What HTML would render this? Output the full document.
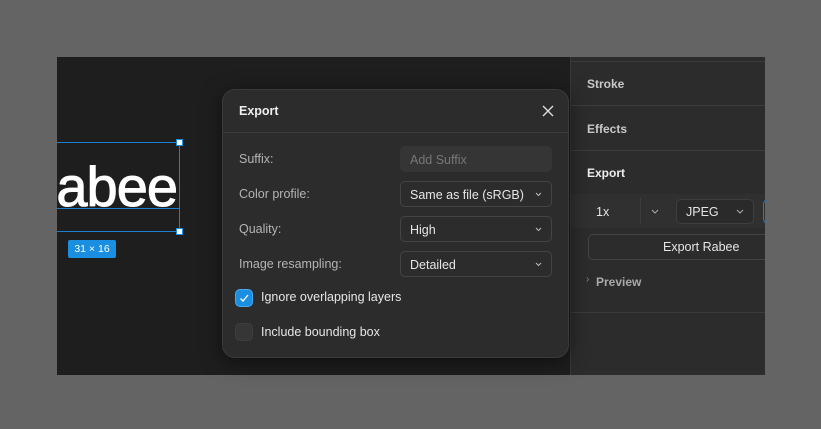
<!DOCTYPE html>
<html><head><style>
*{margin:0;padding:0;box-sizing:border-box}
body{width:821px;height:429px;background:#646464;position:relative;overflow:hidden;font-family:"Liberation Sans",sans-serif}
.abs{position:absolute}
.canvas{left:57px;top:57px;width:513px;height:318px;background:#1e1e1e;overflow:hidden}
.panel{left:570px;top:57px;width:195px;height:318px;background:#2c2c2c;border-left:1px solid #383838;overflow:hidden}
.ptxt{position:absolute;left:16px;font-size:12px;font-weight:bold;color:#c8c8c8}
.hl{position:absolute;left:0;width:195px;height:1px;background:#3c3c3c}
.dlg{left:222px;top:89px;width:347px;height:269px;background:#2c2c2c;border-radius:13px;border:1px solid #3a3a3a;box-shadow:0 4px 20px rgba(0,0,0,.5)}
.lbl{position:absolute;left:16px;font-size:12.5px;color:#b4b4b4}
.sel{position:absolute;left:177px;width:152px;height:26px;border:1px solid #444;border-radius:5px;font-size:12.5px;color:#e6e6e6;padding:6px 9px}
.sel svg{position:absolute;right:9px;top:10px}
.cb{position:absolute;left:12px;width:18px;height:18px;border-radius:5px}
.cbt{position:absolute;left:38px;font-size:12.5px;color:#e6e6e6}
</style></head><body>
<div class="abs canvas">
 <div class="abs" style="right:393px;top:102px;font-size:56px;line-height:56px;color:#fff;letter-spacing:-1px;white-space:nowrap;-webkit-text-stroke:1px #fff">Rabee</div>
 <div class="abs" style="left:-2px;top:85px;width:125px;height:90px;border:1px solid #1a7fd0"></div>
 <div class="abs" style="left:-2px;top:151px;width:125px;height:1px;background:#1a7fd0"></div>
 <div class="abs" style="left:119px;top:82px;width:7px;height:7px;background:#fff;border:1px solid #1a8ee1"></div>
 <div class="abs" style="left:119px;top:171px;width:7px;height:7px;background:#fff;border:1px solid #1a8ee1"></div>
 <div class="abs" style="left:11px;top:183px;width:48px;height:18px;background:#1a8ee1;border-radius:2px;color:#fff;font-size:10.5px;text-align:center;line-height:18px">31 × 16</div>
</div>
<div class="abs panel">
 <div class="hl" style="top:4px"></div>
 <div class="ptxt" style="top:20px">Stroke</div>
 <div class="hl" style="top:48px"></div>
 <div class="ptxt" style="top:65px">Effects</div>
 <div class="hl" style="top:93px"></div>
 <div class="ptxt" style="top:109px;color:#eee">Export</div>
 <div class="abs" style="left:0;top:137px;width:195px;height:34px;background:#303030"></div>
 <div class="abs" style="left:25px;top:148px;font-size:12.5px;color:#e6e6e6">1x</div>
 <div class="abs" style="left:69px;top:141px;width:1px;height:26px;background:#3c3c3c"></div>
 <svg class="abs" style="left:80px;top:152px" width="8" height="5"><path d="M1 1l3 3 3-3" stroke="#aaa" fill="none"/></svg>
 <div class="abs" style="left:105px;top:142px;width:78px;height:25px;border:1px solid #3e3e3e;border-radius:5px;background:#2a2a2a;font-size:12.5px;color:#e6e6e6;padding:5px 9px">JPEG</div>
 <svg class="abs" style="left:165px;top:152px" width="8" height="5"><path d="M1 1l3 3 3-3" stroke="#aaa" fill="none"/></svg>
 <div class="abs" style="left:192px;top:142px;width:6px;height:25px;border:1px solid #1a7fd0;border-radius:5px 0 0 5px"></div>
 <div class="abs" style="left:17px;top:177px;width:190px;height:26px;border:1px solid #444;border-radius:5px;font-size:12.5px;color:#e6e6e6;padding:5px 0 0 74px">Export Rabee</div>
 <div class="abs" style="left:15px;top:217px;font-size:10px;color:#888">›</div>
 <div class="ptxt" style="left:25px;top:218px;color:#aaa">Preview</div>
 <div class="hl" style="top:255px"></div>
</div>
<div class="abs dlg">
 <div class="abs" style="left:16px;top:14px;font-size:12.5px;font-weight:bold;color:#eee">Export</div>
 <svg class="abs" style="left:319px;top:15px" width="12" height="12"><path d="M1 1l10 10M11 1L1 11" stroke="#ddd" stroke-width="1.4"/></svg>
 <div class="abs" style="left:0;top:42px;width:345px;height:1px;background:#3a3a3a"></div>
 <div class="lbl" style="top:62px">Suffix:</div>
 <div class="sel" style="top:56px;background:#353535;border-color:#353535;color:#777">Add Suffix</div>
 <div class="lbl" style="top:97px">Color profile:</div>
 <div class="sel" style="top:91px">Same as file (sRGB)<svg width="7" height="5"><path d="M1 1l2.5 2.5L6 1" stroke="#bbb" fill="none"/></svg></div>
 <div class="lbl" style="top:132px">Quality:</div>
 <div class="sel" style="top:126px">High<svg width="7" height="5"><path d="M1 1l2.5 2.5L6 1" stroke="#bbb" fill="none"/></svg></div>
 <div class="lbl" style="top:167px">Image resampling:</div>
 <div class="sel" style="top:161px">Detailed<svg width="7" height="5"><path d="M1 1l2.5 2.5L6 1" stroke="#bbb" fill="none"/></svg></div>
 <div class="cb" style="top:199px;background:#1a8ee1;border:1px solid #4aa8ee"><svg width="16" height="16" style="position:absolute;left:0;top:0"><path d="M4.5 8.5l2.5 2.5 5-6" stroke="#fff" stroke-width="1.3" fill="none"/></svg></div>
 <div class="cbt" style="top:200px">Ignore overlapping layers</div>
 <div class="cb" style="top:233px;background:#363636;border:1px solid #3e3e3e"></div>
 <div class="cbt" style="top:235px">Include bounding box</div>
</div>
</body></html>
